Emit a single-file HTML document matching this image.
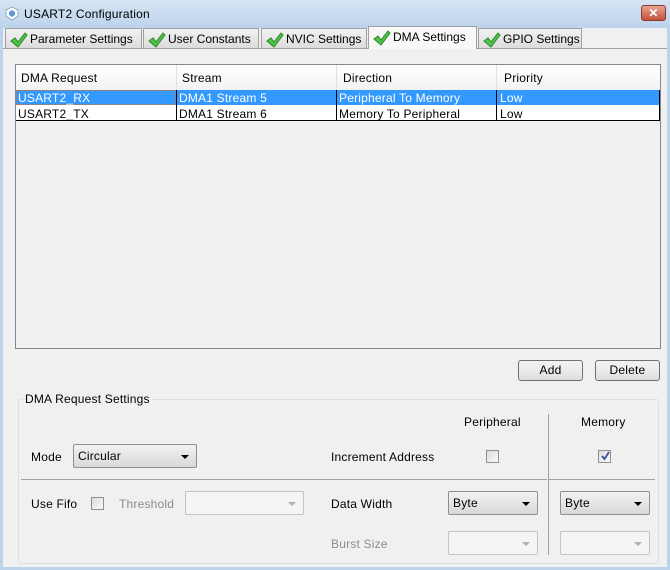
<!DOCTYPE html><html><head><style>
*{box-sizing:border-box;margin:0;padding:0}
body{width:670px;height:570px;position:relative;font-family:"Liberation Sans","NanumGothic",sans-serif;font-size:12px;color:#000;background:#f0f0f0;overflow:hidden;letter-spacing:0.2px}
.a{position:absolute}
.t{position:absolute;white-space:nowrap;line-height:14px}
.tab{position:absolute;top:28px;height:20px;border:1px solid #a0a0a0;border-bottom:none;background:linear-gradient(#f2f2f2,#dcdcdc);padding-left:24px;line-height:21px;font-size:12px;white-space:nowrap;letter-spacing:0}
.chk{position:absolute;left:4px;top:3px}
.combo{position:absolute;height:24px;border:1px solid #8e8f8f;border-radius:2px;background:linear-gradient(#f2f2f2,#e5e5e5 50%,#d9d9d9);padding-left:4px;line-height:22px}
.combo.dis{border-color:#c4c4c4;background:#f4f4f4}
.arr{position:absolute;right:7px;top:10px;width:0;height:0;border-left:4px solid transparent;border-right:4px solid transparent;border-top:4px solid #000}
.dis .arr{border-top-color:#b0b0b0}
.cb{position:absolute;width:13px;height:13px;border:1px solid #8f8f8f;background:linear-gradient(135deg,#dcdcdc,#f8f8f8)}
.btn{position:absolute;height:21px;border:1px solid #707070;border-radius:3px;background:linear-gradient(#f2f2f2,#ebebeb 50%,#dddddd);text-align:center;line-height:19px}
.gr{color:#8d8d8d}
</style></head><body>
<div class="a" style="left:0;top:0;width:670px;height:28px;background:linear-gradient(#d6e4f3,#bcd3ec)"></div>
<svg class="a" style="left:5px;top:6px" width="14" height="15"><path d="M7 1 L13 4 L13 10 L7 14 L1 10 L1 4Z" fill="#fff" stroke="#8aa8c8"/><path d="M7 4 L10 6 L10 9 L7 11 L4 9 L4 6Z" fill="#5b9ad6"/></svg>
<div class="t" style="left:24px;top:7px;font-size:12px">USART2 Configuration</div>
<div class="a" style="left:641px;top:5px;width:25px;height:16px;border:1px solid #8a3b2f;border-radius:3px;background:linear-gradient(#e8a393,#c4513a);color:#fff;text-align:center;font-weight:bold;line-height:14px;font-size:12px">✕</div>
<div class="a" style="left:0;top:28px;width:3px;height:542px;background:#bcd3ec"></div>
<div class="a" style="left:667px;top:28px;width:3px;height:542px;background:#bcd3ec"></div>
<div class="a" style="left:0;top:567px;width:670px;height:3px;background:#bcd3ec"></div>
<div class="a" style="left:3px;top:48px;width:664px;height:1px;background:#a0a0a0"></div>
<svg width="0" height="0" style="position:absolute"><defs><symbol id="ck" viewBox="0 0 18 16"><path d="M1 9 L5 6 L8 10 L15 1 L17 3 L8 15Z" fill="#4fc24a" stroke="#2d8a2a" stroke-width="1"/></symbol></defs></svg>
<div class="tab" style="left:5px;width:137px"><svg class="chk" width="18" height="16"><use href="#ck"/></svg>Parameter Settings</div>
<div class="tab" style="left:143px;width:116px"><svg class="chk" width="18" height="16"><use href="#ck"/></svg>User Constants</div>
<div class="tab" style="left:261px;width:106px"><svg class="chk" width="18" height="16"><use href="#ck"/></svg>NVIC Settings</div>
<div class="tab" style="left:368px;top:26px;height:23px;width:109px;background:#f8f8f8;border-color:#a0a0a0;line-height:21px"><svg class="chk" width="18" height="16"><use href="#ck"/></svg>DMA Settings</div>
<div class="tab" style="left:478px;width:104px"><svg class="chk" width="18" height="16"><use href="#ck"/></svg>GPIO Settings</div>
<div class="a" style="left:15px;top:64px;width:646px;height:285px;border:1px solid #828790;background:#f0f0f0"></div>
<div class="a" style="left:16px;top:65px;width:644px;height:24px;background:linear-gradient(#fff,#f3f3f3)"></div>
<div class="a" style="left:176px;top:65px;width:1px;height:24px;background:#e0e0e0"></div>
<div class="a" style="left:336px;top:65px;width:1px;height:24px;background:#e0e0e0"></div>
<div class="a" style="left:496px;top:65px;width:1px;height:24px;background:#e0e0e0"></div>
<div class="t" style="left:21px;top:71px">DMA Request</div>
<div class="t" style="left:182px;top:71px">Stream</div>
<div class="t" style="left:343px;top:71px">Direction</div>
<div class="t" style="left:504px;top:71px">Priority</div>
<div class="a" style="left:16px;top:90px;width:644px;height:15px;background:#3399ff"></div>
<div class="a" style="left:16px;top:90px;width:160px;height:15px;border:1px dotted #e07020"></div>
<div class="a" style="left:16px;top:105px;width:644px;height:16px;background:#fff;border-bottom:1px solid #000"></div>
<div class="a" style="left:659px;top:90px;width:1px;height:31px;background:#000"></div>
<div class="a" style="left:176px;top:90px;width:1px;height:31px;background:#000"></div>
<div class="a" style="left:336px;top:90px;width:1px;height:31px;background:#000"></div>
<div class="a" style="left:496px;top:90px;width:1px;height:31px;background:#000"></div>
<div class="t" style="left:18px;top:91px;color:#fff">USART2_RX</div>
<div class="t" style="left:179px;top:91px;color:#fff">DMA1 Stream 5</div>
<div class="t" style="left:339px;top:91px;color:#fff">Peripheral To Memory</div>
<div class="t" style="left:500px;top:91px;color:#fff">Low</div>
<div class="t" style="left:18px;top:107px">USART2_TX</div>
<div class="t" style="left:179px;top:107px">DMA1 Stream 6</div>
<div class="t" style="left:339px;top:107px">Memory To Peripheral</div>
<div class="t" style="left:500px;top:107px">Low</div>
<div class="btn" style="left:518px;top:360px;width:65px">Add</div>
<div class="btn" style="left:595px;top:360px;width:65px">Delete</div>
<div class="a" style="left:18px;top:399px;width:641px;height:165px;border:1px solid #d5dfe5;border-radius:3px"></div>
<div class="t" style="left:23px;top:392px;background:#f0f0f0;padding:0 2px">DMA Request Settings</div>
<div class="a" style="left:21px;top:479px;width:526px;height:1px;background:#a0a0a0"></div>
<div class="a" style="left:549px;top:479px;width:106px;height:1px;background:#a0a0a0"></div>
<div class="a" style="left:548px;top:414px;width:1px;height:141px;background:#a0a0a0"></div>
<div class="t" style="left:464px;top:415px">Peripheral</div>
<div class="t" style="left:581px;top:415px">Memory</div>
<div class="t" style="left:31px;top:450px">Mode</div>
<div class="combo" style="left:73px;top:444px;width:124px">Circular<div class="arr"></div></div>
<div class="t" style="left:331px;top:450px">Increment Address</div>
<div class="cb" style="left:486px;top:450px"></div>
<div class="cb" style="left:598px;top:450px"><svg class="a" style="left:1px;top:0" width="11" height="11"><path d="M2 5 L4.5 8 L9 1" stroke="#3a4e9a" stroke-width="1.8" fill="none"/></svg></div>
<div class="t" style="left:31px;top:497px">Use Fifo</div>
<div class="cb" style="left:91px;top:497px"></div>
<div class="t gr" style="left:119px;top:497px">Threshold</div>
<div class="combo dis" style="left:185px;top:491px;width:119px"><div class="arr"></div></div>
<div class="t" style="left:331px;top:497px">Data Width</div>
<div class="combo" style="left:448px;top:491px;width:90px">Byte<div class="arr"></div></div>
<div class="combo" style="left:560px;top:491px;width:90px">Byte<div class="arr"></div></div>
<div class="t gr" style="left:331px;top:537px">Burst Size</div>
<div class="combo dis" style="left:448px;top:531px;width:90px"><div class="arr"></div></div>
<div class="combo dis" style="left:560px;top:531px;width:90px"><div class="arr"></div></div>
</body></html>
